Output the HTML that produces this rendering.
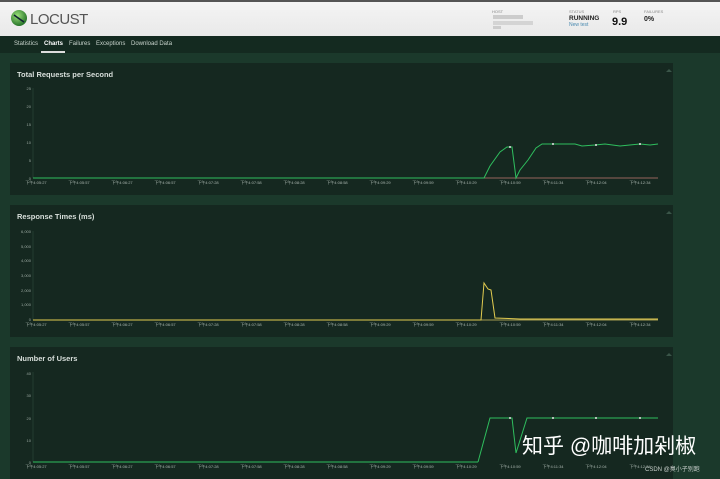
<!DOCTYPE html>
<html><head><meta charset="utf-8"><style>
*{margin:0;padding:0;box-sizing:border-box}
body{width:720px;height:478px;overflow:hidden;background:#1b392b;font-family:"Liberation Sans","Noto Sans CJK SC",sans-serif;position:relative}
.hdr{position:absolute;left:0;top:0;width:720px;height:36px;background:linear-gradient(#f4f4f4,#e9e9e9);border-top:2px solid #555}
.nav{position:absolute;left:0;top:36px;width:720px;height:17px;background:#142a20}
.nav span{position:absolute;top:5px;font-size:6px;color:#c9d4cd}
.panel{position:absolute;left:10px;width:663px;height:132px;background:#152820}
.title{position:absolute;left:7px;top:7px;font-size:7.5px;font-weight:bold;color:#d8dfdb}
</style></head><body>
<div class="hdr">
<svg width="720" height="36" style="position:absolute;left:0;top:-2px">
<defs><radialGradient id="g" cx="40%" cy="35%" r="70%"><stop offset="0" stop-color="#9be07a"/><stop offset="1" stop-color="#1d6b22"/></radialGradient></defs>
<circle cx="19" cy="18" r="8" fill="url(#g)"/>
<path d="M14 15 Q18 18 24 22" stroke="#123" stroke-width="1.6" fill="none"/>
<text x="30" y="24" font-size="15" fill="#555" font-family="Liberation Sans" letter-spacing="-0.5">LOCUST</text>
<text x="492" y="13" font-size="4" fill="#888">HOST</text>
<rect x="493" y="15" width="30" height="4" fill="#ccc"/>
<rect x="493" y="21" width="40" height="4" fill="#d4d4d4"/>
<rect x="493" y="26" width="8" height="3" fill="#ccc"/>
<text x="569" y="13" font-size="4" fill="#888">STATUS</text>
<text x="569" y="20" font-size="6.5" font-weight="bold" fill="#222">RUNNING</text>
<text x="569" y="26" font-size="5" fill="#4a8ab0">New test</text>
<text x="613" y="13" font-size="4" fill="#888">RPS</text>
<text x="612" y="25" font-size="11" font-weight="bold" fill="#111">9.9</text>
<text x="644" y="13" font-size="4" fill="#888">FAILURES</text>
<text x="644" y="21" font-size="7" font-weight="bold" fill="#222">0%</text>
</svg>
</div>
<div class="nav">
<span style="left:14px">Statistics</span>
<span style="left:44px;color:#fff;font-weight:bold">Charts</span>
<span style="left:69px">Failures</span>
<span style="left:96px">Exceptions</span>
<span style="left:131px">Download Data</span>
<div style="position:absolute;left:41px;top:15px;width:24px;height:2px;background:#ddd"></div>
</div>
<div class="panel" style="top:63px"><div class="title">Total Requests per Second</div></div>
<div class="panel" style="top:205px"><div class="title">Response Times (ms)</div></div>
<div class="panel" style="top:347px"><div class="title">Number of Users</div></div>
<svg width="720" height="478" style="position:absolute;left:0;top:0" font-family="Liberation Sans,Noto Sans CJK SC,sans-serif">
<defs>
<g id="lb" fill="#aab6af" font-size="4" text-anchor="middle">
<text x="36" y="0">下午4:05:27</text><text x="79" y="0">下午4:05:57</text><text x="122" y="0">下午4:06:27</text><text x="165" y="0">下午4:06:57</text><text x="208" y="0">下午4:07:28</text><text x="251" y="0">下午4:07:58</text><text x="294" y="0">下午4:08:28</text><text x="337" y="0">下午4:08:58</text><text x="380" y="0">下午4:09:29</text><text x="423" y="0">下午4:09:59</text><text x="466" y="0">下午4:10:29</text><text x="510" y="0">下午4:10:59</text><text x="553" y="0">下午4:11:34</text><text x="596" y="0">下午4:12:04</text><text x="640" y="0">下午4:12:34</text>
</g>
</defs>
<g fill="#9aa8a0" font-size="4" text-anchor="end">
<text x="31" y="90">25</text><text x="31" y="108">20</text><text x="31" y="126">15</text><text x="31" y="144">10</text><text x="31" y="162">5</text><text x="31" y="180">0</text>
<text x="31" y="233">6,000</text><text x="31" y="248">5,000</text><text x="31" y="262">4,000</text><text x="31" y="277">3,000</text><text x="31" y="292">2,000</text><text x="31" y="306">1,000</text><text x="31" y="321">0</text>
<text x="31" y="375">40</text><text x="31" y="397">30</text><text x="31" y="420">20</text><text x="31" y="442">10</text><text x="31" y="464">0</text>
</g>
<g stroke="#2f4a3c" stroke-width="0.6">
<line x1="33" y1="88" x2="33" y2="178"/><line x1="33" y1="231" x2="33" y2="320"/><line x1="33" y1="372" x2="33" y2="462"/>
</g>
<use href="#lb" y="184"/><use href="#lb" y="326"/><use href="#lb" y="468"/>
<line x1="33" y1="178" x2="658" y2="178" stroke="#c07a70" stroke-width="0.8"/>
<polyline points="33,178 484,178 490,166 500,152 507,147 512,147 516,178 520,170 528,160 536,148 542,144 560,144 575,144 582,146 595,145 605,144 620,146 640,144 650,145 658,144" fill="none" stroke="#2fbe5e" stroke-width="1"/>
<line x1="33" y1="320" x2="658" y2="320" stroke="#d4c060" stroke-width="0.8"/>
<polyline points="33,320 481,320 484,283 488,289 491,290 495,318 520,319 658,319" fill="none" stroke="#e2cc50" stroke-width="1"/>
<line x1="33" y1="462" x2="478" y2="462" stroke="#2fbe5e" stroke-width="1"/>
<polyline points="478,462 490,418 512,418 516,453 527,418 658,418" fill="none" stroke="#2fbe5e" stroke-width="1"/>
<g fill="#e8e8e8"><circle cx="510" cy="147" r="1"/><circle cx="553" cy="144" r="1"/><circle cx="596" cy="145" r="1"/><circle cx="640" cy="144" r="1"/>
<circle cx="510" cy="418" r="1"/><circle cx="553" cy="418" r="1"/><circle cx="596" cy="418" r="1"/><circle cx="640" cy="418" r="1"/></g>
<text x="522" y="453" font-size="21" fill="#fff">知乎 @咖啡加剁椒</text>
<text x="645" y="471" font-size="6" fill="#c9d0cc">CSDN @臭小子别跑</text>
<g fill="#3a5548"><path d="M666 72l3-3 3 3z"/><path d="M666 214l3-3 3 3z"/><path d="M666 356l3-3 3 3z"/></g>
</svg>
</body></html>
